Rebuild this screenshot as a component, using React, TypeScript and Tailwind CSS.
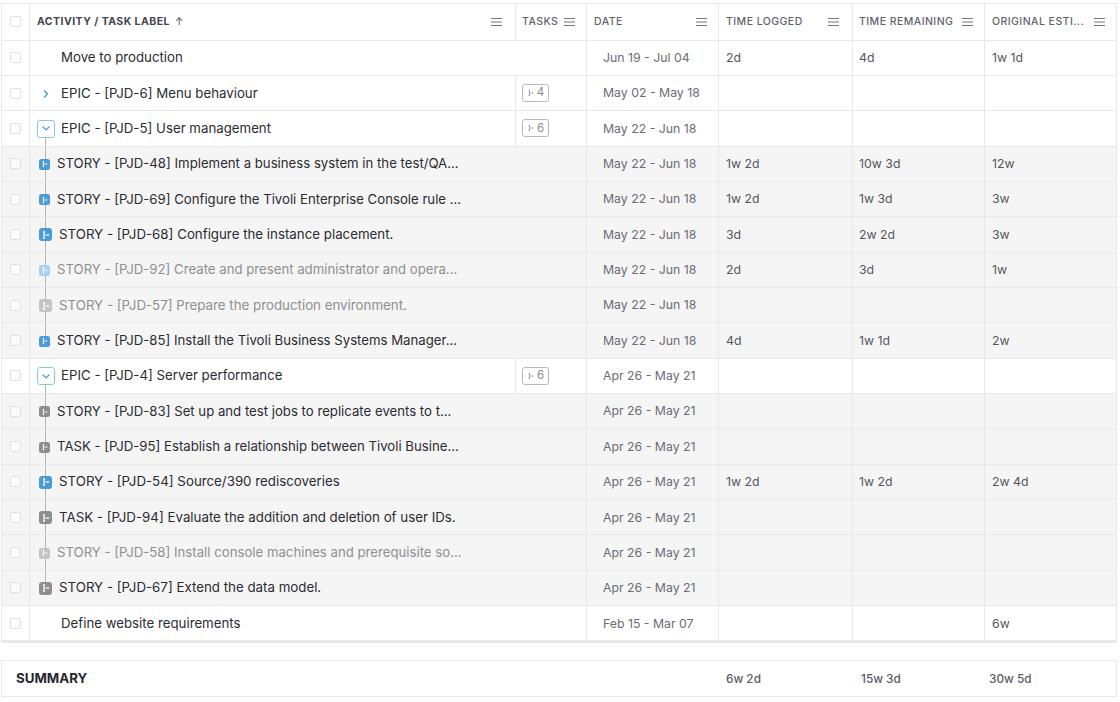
type RowData = {
  label: string
  date: string
  logged?: string
  remaining?: string
  estimate?: string
  kind: "plain" | "epicClosed" | "epicOpen" | "child"
  tasks?: number
  icon?: "blue" | "gray" | "lightBlue" | "lightGray"
  big?: boolean
  muted?: boolean
  lineEnd?: boolean
}

const rows: RowData[] = [
  { label: "Move to production", date: "Jun 19 - Jul 04", logged: "2d", remaining: "4d", estimate: "1w 1d", kind: "plain" },
  { label: "EPIC - [PJD-6] Menu behaviour", date: "May 02 - May 18", kind: "epicClosed", tasks: 4 },
  { label: "EPIC - [PJD-5] User management", date: "May 22 - Jun 18", kind: "epicOpen", tasks: 6 },
  { label: "STORY - [PJD-48] Implement a business system in the test/QA...", date: "May 22 - Jun 18", logged: "1w 2d", remaining: "10w 3d", estimate: "12w", kind: "child", icon: "blue" },
  { label: "STORY - [PJD-69] Configure the Tivoli Enterprise Console rule ...", date: "May 22 - Jun 18", logged: "1w 2d", remaining: "1w 3d", estimate: "3w", kind: "child", icon: "blue" },
  { label: "STORY - [PJD-68] Configure the instance placement.", date: "May 22 - Jun 18", logged: "3d", remaining: "2w 2d", estimate: "3w", kind: "child", icon: "blue", big: true },
  { label: "STORY - [PJD-92] Create and present administrator and opera...", date: "May 22 - Jun 18", logged: "2d", remaining: "3d", estimate: "1w", kind: "child", icon: "lightBlue", muted: true },
  { label: "STORY - [PJD-57] Prepare the production environment.", date: "May 22 - Jun 18", kind: "child", icon: "lightGray", big: true, muted: true },
  { label: "STORY - [PJD-85] Install the Tivoli Business Systems Manager...", date: "May 22 - Jun 18", logged: "4d", remaining: "1w 1d", estimate: "2w", kind: "child", icon: "blue", lineEnd: true },
  { label: "EPIC - [PJD-4] Server performance", date: "Apr 26 - May 21", kind: "epicOpen", tasks: 6 },
  { label: "STORY - [PJD-83] Set up and test jobs to replicate events to t...", date: "Apr 26 - May 21", kind: "child", icon: "gray" },
  { label: "TASK - [PJD-95] Establish a relationship between Tivoli Busine...", date: "Apr 26 - May 21", kind: "child", icon: "gray" },
  { label: "STORY - [PJD-54] Source/390 rediscoveries", date: "Apr 26 - May 21", logged: "1w 2d", remaining: "1w 2d", estimate: "2w 4d", kind: "child", icon: "blue", big: true },
  { label: "TASK - [PJD-94] Evaluate the addition and deletion of user IDs.", date: "Apr 26 - May 21", kind: "child", icon: "gray", big: true },
  { label: "STORY - [PJD-58] Install console machines and prerequisite so...", date: "Apr 26 - May 21", kind: "child", icon: "lightGray", muted: true },
  { label: "STORY - [PJD-67] Extend the data model.", date: "Apr 26 - May 21", kind: "child", icon: "gray", big: true, lineEnd: true },
  { label: "Define website requirements", date: "Feb 15 - Mar 07", estimate: "6w", kind: "plain" },
]

const gridCols = "grid grid-cols-[28px_486px_71px_132px_134px_132px_1fr]"
const iconColors = {
  blue: "bg-[#4a9bd9]",
  gray: "bg-[#8e8e8e]",
  lightBlue: "bg-[#a9d0ee]",
  lightGray: "bg-[#c4c4c4]",
}

function Checkbox() {
  return <span className="block h-[11px] w-[11px] rounded-[2px] border border-[#e0e0e0] bg-white/60" />
}

function MenuIcon() {
  return (
    <svg width="11" height="8" viewBox="0 0 11 8" className="shrink-0 text-[#77777f]">
      <path d="M0 .5h11M0 4h11M0 7.5h11" stroke="currentColor" strokeWidth="1" />
    </svg>
  )
}

function BranchGlyph({ size, stroke }: { size: number; stroke: string }) {
  return (
    <svg width={size} height={size} viewBox="0 0 10 10" fill="none" stroke={stroke} strokeWidth="1.1">
      <path d="M3 2.5v5M3 5h2.5" />
      <circle cx="3" cy="2" r="1" fill={stroke} stroke="none" />
      <circle cx="3" cy="8" r="1" fill={stroke} stroke="none" />
      <circle cx="7" cy="5" r="1" fill={stroke} stroke="none" />
    </svg>
  )
}

function HeaderCell({ title, bold, className }: { title: string; bold?: boolean; className?: string }) {
  return (
    <div className={`flex items-center justify-between border-r border-[#e8e8e8] ${className ?? "pl-[7px] pr-[13px]"}`}>
      <span className={bold ? "flex items-center gap-[5px] text-[#45454f] font-bold" : "text-[#62626c] font-medium"}>
        {title}
        {bold && <span className="text-[10px] font-normal">↑</span>}
      </span>
      <MenuIcon />
    </div>
  )
}

function RowToggle({ kind }: { kind: RowData["kind"] }) {
  if (kind === "epicClosed") {
    return (
      <span className="flex w-[18px] shrink-0 justify-center">
        <svg width="8" height="10" viewBox="0 0 8 10" fill="none" stroke="#4a9bd9" strokeWidth="1.4">
          <path d="M2 1.5 5.5 5 2 8.5" />
        </svg>
      </span>
    )
  }
  if (kind === "epicOpen") {
    return (
      <span className="relative z-10 flex h-[18px] w-[18px] shrink-0 items-center justify-center rounded-[3px] border border-[#8cc3ec] bg-white">
        <svg width="10" height="7" viewBox="0 0 10 7" fill="none" stroke="#4a9bd9" strokeWidth="1.2">
          <path d="M1.5 1.5 5 5l3.5-3.5" />
        </svg>
      </span>
    )
  }
  return <span className="block w-[18px] shrink-0" />
}

function TableRow({ row }: { row: RowData }) {
  const isChild = row.kind === "child"
  const isEpic = row.kind === "epicClosed" || row.kind === "epicOpen"
  const textColor = row.muted ? "text-[#8f8f8f]" : "text-[#2b2b32]"
  return (
    <div className={`${gridCols} h-[35.35px] border-b border-[#e8e8e8] text-[12.3px] ${isChild ? "bg-[#f5f5f5]" : "bg-white"}`}>
      <div className="flex items-center justify-center border-r border-[#e8e8e8]">
        <Checkbox />
      </div>
      <div className={`relative flex items-center border-r border-[#e8e8e8] pt-[1px] ${isEpic ? "col-span-1" : "col-span-2"}`}>
        {isChild && (
          <span className={`absolute left-[15px] top-0 w-px bg-[#b5b5b5] ${row.lineEnd ? "h-1/2" : "h-full"}`} />
        )}
        {row.kind === "epicOpen" && <span className="absolute left-[15px] top-1/2 h-1/2 w-px bg-[#b5b5b5]" />}
        {isChild ? (
          <>
            <span
              className={`relative ml-[9px] flex shrink-0 items-center justify-center ${iconColors[row.icon ?? "blue"]} ${row.big ? "h-[13px] w-[13px] rounded-[3px]" : "h-[11px] w-[11px] rounded-[2.5px]"}`}
            >
              <BranchGlyph size={row.big ? 10 : 8} stroke="white" />
            </span>
            <span className={`ml-[7px] truncate ${row.big ? "text-[13.3px]" : "text-[13.2px]"} ${textColor}`}>{row.label}</span>
          </>
        ) : (
          <>
            <span className="ml-[7px] flex">
              <RowToggle kind={row.kind} />
            </span>
            <span className={`ml-[6px] text-[13.25px] ${textColor}`}>{row.label}</span>
          </>
        )}
      </div>
      {isEpic && (
        <div className="flex items-center border-r border-[#e8e8e8] pl-[6px]">
          <span className="flex h-[18px] w-[27px] items-center justify-center gap-[2px] rounded-[3px] border border-[#b9b9b9] text-[11.5px] text-[#8b8b8b]">
            <BranchGlyph size={8} stroke="#9a9a9a" />
            {row.tasks}
          </span>
        </div>
      )}
      <div className="flex items-center border-r border-[#e8e8e8] pl-[16px] pt-[1px] text-[#6b6b76]">{row.date}</div>
      <div className="flex items-center border-r border-[#e8e8e8] pl-[7px] pt-[1px] text-[#55555e]">{row.logged}</div>
      <div className="flex items-center border-r border-[#e8e8e8] pl-[6px] pt-[1px] text-[#55555e]">{row.remaining}</div>
      <div className="flex items-center border-r border-[#e8e8e8] pl-[7px] pt-[1px] text-[#55555e]">{row.estimate}</div>
    </div>
  )
}

export default function App() {
  return (
    <div className="h-[702px] w-[1120px] overflow-hidden bg-white pl-[1px] pr-[3px] pt-[3px] font-['Inter',sans-serif]">
      <div className="border-b-2 border-l border-t border-[#e8e8e8]">
        <div className={`${gridCols} h-[36.6px] border-b border-[#e8e8e8] text-[10.5px] uppercase tracking-[0.45px]`}>
          <div className="flex items-center justify-center border-r border-[#e8e8e8]">
            <Checkbox />
          </div>
          <HeaderCell title="Activity / Task Label" bold />
          <HeaderCell title="Tasks" className="pl-[6px] pr-[11px]" />
          <HeaderCell title="Date" className="pl-[7px] pr-[11px]" />
          <HeaderCell title="Time Logged" className="pl-[7px] pr-[13px]" />
          <HeaderCell title="Time Remaining" className="pl-[6px] pr-[11px]" />
          <HeaderCell title="Original Esti..." className="pl-[7px] pr-[11px]" />
        </div>
        {rows.map((row) => (
          <TableRow key={row.label} row={row} />
        ))}
      </div>
      <div className={`${gridCols} mt-[16.4px] h-[37px] items-center border border-[#e8e8e8] text-[11.8px] font-medium text-[#5a5a62]`}>
        <span className="col-span-4 pl-[14px] pt-[2px] text-[13.3px] font-bold text-[#27272e]">SUMMARY</span>
        <span className="pl-[7px] pt-[3px]">6w 2d</span>
        <span className="pl-[8px] pt-[3px]">15w 3d</span>
        <span className="pl-[4px] pt-[3px]">30w 5d</span>
      </div>
    </div>
  )
}
